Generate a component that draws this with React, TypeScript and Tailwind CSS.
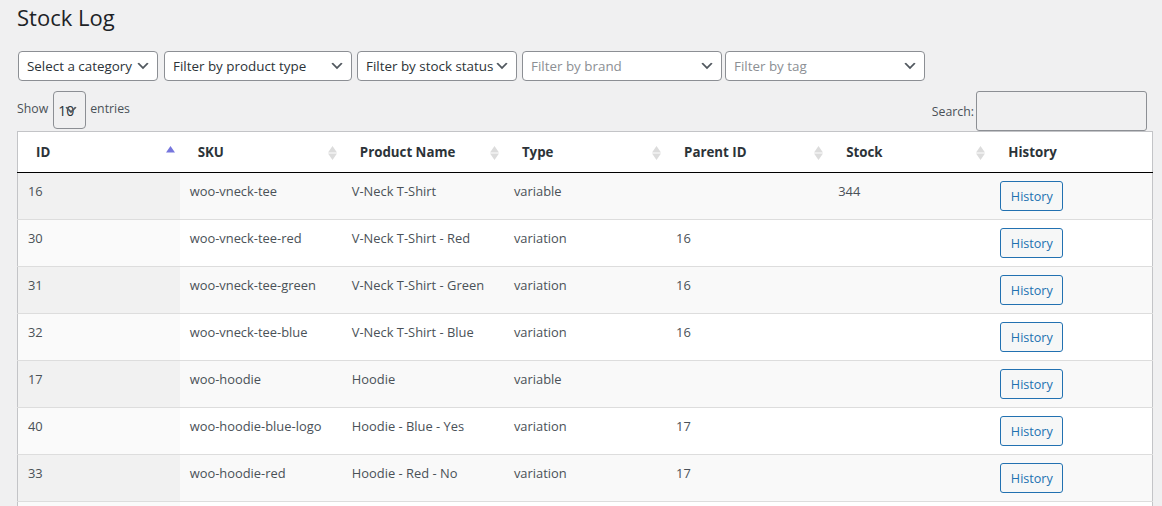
const rows = [
  { id: "16", sku: "woo-vneck-tee", name: "V-Neck T-Shirt", type: "variable", parent: "", stock: "344" },
  { id: "30", sku: "woo-vneck-tee-red", name: "V-Neck T-Shirt - Red", type: "variation", parent: "16", stock: "" },
  { id: "31", sku: "woo-vneck-tee-green", name: "V-Neck T-Shirt - Green", type: "variation", parent: "16", stock: "" },
  { id: "32", sku: "woo-vneck-tee-blue", name: "V-Neck T-Shirt - Blue", type: "variation", parent: "16", stock: "" },
  { id: "17", sku: "woo-hoodie", name: "Hoodie", type: "variable", parent: "", stock: "" },
  { id: "40", sku: "woo-hoodie-blue-logo", name: "Hoodie - Blue - Yes", type: "variation", parent: "17", stock: "" },
  { id: "33", sku: "woo-hoodie-red", name: "Hoodie - Red - No", type: "variation", parent: "17", stock: "" },
];

const columns = ["ID", "SKU", "Product Name", "Type", "Parent ID", "Stock", "History"];

function Chevron() {
  return (
    <svg width="16" height="16" viewBox="0 0 20 20" className="shrink-0 text-[#50575e]">
      <path d="M5 6l5 5 5-5 2 1-7 7-7-7z" fill="currentColor" />
    </svg>
  );
}

function Filter({ label, width, muted }: { label: string; width: string; muted?: boolean }) {
  return (
    <div className={`${width} h-[30px] flex items-center justify-between pl-2 pr-[6px] bg-white border border-[#8c8f94] rounded-[4px] text-[13.4px] ${muted ? "text-[#8c8f94]" : "text-[#2c3338]"}`}>
      <span className="whitespace-nowrap">{label}</span>
      <Chevron />
    </div>
  );
}

function SortArrows({ active }: { active?: boolean }) {
  return (
    <svg width="9" height="14" viewBox="0 0 9 14" className="shrink-0">
      <path d="M4.5 0L9 6.5H0z" fill={active ? "#7676dd" : "#dcdcdc"} />
      {!active && <path d="M4.5 14L0 7.5H9z" fill="#dcdcdc" />}
    </svg>
  );
}

export default function App() {
  return (
    <div className="h-[506px] overflow-hidden bg-[#f0f0f1] pl-[17px] pr-[9px] font-['Open_Sans','Noto_Sans',sans-serif] text-[#4a5157]">
      <h1 className="h-[51px] text-[22px] leading-[34px] text-[#1d2327]">Stock Log</h1>

      <div className="flex pl-px h-[40px]">
        <Filter label="Select a category" width="w-[140px]" />
        <div className="ml-[6px]"><Filter label="Filter by product type" width="w-[188px]" /></div>
        <div className="ml-[5px]"><Filter label="Filter by stock status" width="w-[160px]" /></div>
        <div className="ml-[5px]"><Filter label="Filter by brand" width="w-[200px]" muted /></div>
        <div className="ml-[3px]"><Filter label="Filter by tag" width="w-[200px]" muted /></div>
      </div>

      <div className="flex justify-between h-[40px] text-[12.3px]">
        <div className="flex items-start gap-[4px] leading-[36px]">
          <span className="mr-px">Show</span>
          <div className="relative w-[33px] h-[38px] border border-[#8c8f94] rounded-[4px] text-[14px] leading-[34px] text-[#2c3338]">
            <span className="absolute left-[4px] top-[2px]">10</span>
            <span className="absolute left-[9px] top-[10px]"><Chevron /></span>
          </div>
          <span>entries</span>
        </div>
        <div className="flex items-start gap-[2px] pr-[6px]">
          <span className="pt-[10px] leading-[22px]">Search:</span>
          <div className="w-[171px] h-[40px] border border-[#8c8f94] rounded-[3px]" />
        </div>
      </div>

      <table className="w-[1136px] table-fixed border-collapse border border-[#c3c4c7] bg-white text-[12.9px]">
        <thead>
          <tr className="h-[41px] border-b border-black">
            {columns.map((c) => (
              <th key={c} className="pl-[18px] pr-[5px] pt-[1px] text-left text-[13.3px] font-bold text-[#2c3338]">
                <div className="flex items-center justify-between">
                  <span className="whitespace-nowrap">{c}</span>
                  {c !== "History" && <SortArrows active={c === "ID"} />}
                </div>
              </th>
            ))}
          </tr>
        </thead>
        <tbody>
          {rows.map((r, i) => (
            <tr key={r.id} className={`h-[47px] border-b border-[#dddddd] ${i % 2 === 0 ? "bg-[#f9f9f9]" : "bg-white"}`}>
              <td className={`px-[10px] align-top pt-[9px] ${i % 2 === 0 ? "bg-[#f1f1f1]" : "bg-[#fafafa]"}`}>{r.id}</td>
              <td className="px-[10px] align-top pt-[9px] whitespace-nowrap">{r.sku}</td>
              <td className="px-[10px] align-top pt-[9px] whitespace-nowrap">{r.name}</td>
              <td className="px-[10px] align-top pt-[9px]">{r.type}</td>
              <td className="px-[10px] align-top pt-[9px]">{r.parent}</td>
              <td className="px-[10px] align-top pt-[9px]">{r.stock}</td>
              <td className="px-[10px] align-top pt-[8px]">
                <button className="h-[30px] w-[63px] pt-[2px] border border-[#2271b1] rounded-[3px] bg-[#f6f7f7] text-[12.6px] text-[#2271b1]">History</button>
              </td>
            </tr>
          ))}
          <tr className="h-[47px] bg-white">
            <td className="bg-[#fafafa]" />
            <td colSpan={6} />
          </tr>
        </tbody>
      </table>
    </div>
  );
}
